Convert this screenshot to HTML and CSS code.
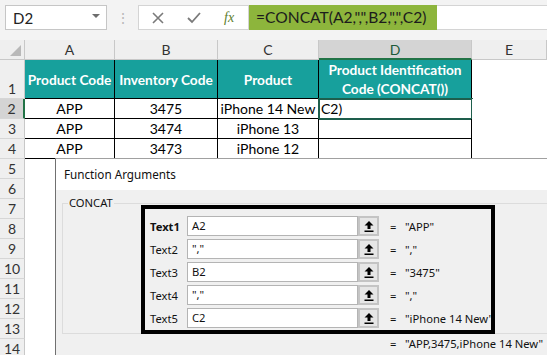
FILE: index.html
```html
<!DOCTYPE html>
<html lang="en">
  <head>
    <meta charset="UTF-8" />
    <title>CONCAT - Function Arguments</title>
    <link rel="stylesheet" href="styles.css">
  </head>

  <body>
    <div class="topbar">
      <div class="namebox">
        <span>D2</span>
        <span class="caret"></span>
      </div>
      <div class="grip">⋮</div>
      <div class="fbuttons">
        <svg class="ico" width="12" height="12" viewBox="0 0 12 12"><path d="M1 1 L11 11 M11 1 L1 11" stroke="#7a7a7a" stroke-width="1.6" fill="none"/></svg>
        <svg class="ico" width="14" height="12" viewBox="0 0 14 12"><path d="M1 6 L5 10 L13 1" stroke="#7a7a7a" stroke-width="1.8" fill="none"/></svg>
        <span class="fx">fx</span>
      </div>
      <div class="formula">=CONCAT(A2,",",B2,",",C2)</div>
      <div class="formula-rest"></div>
    </div>

    <div class="sheet">
      <div class="corner"><span class="tri"></span></div>
      <div class="colhead">A</div>
      <div class="colhead">B</div>
      <div class="colhead">C</div>
      <div class="colhead sel">D</div>
      <div class="colhead">E</div>

      <div class="rowhead bottom">1</div>
      <div class="cell th">Product Code</div>
      <div class="cell th">Inventory Code</div>
      <div class="cell th">Product</div>
      <div class="cell th">Product Identification Code (CONCAT())</div>
      <div class="cell blank"></div>

      <div class="rowhead sel">2</div>
      <div class="cell td">APP</div>
      <div class="cell td">3475</div>
      <div class="cell td">iPhone 14 New</div>
      <div class="cell td left active">C2)</div>
      <div class="cell blank"></div>

      <div class="rowhead">3</div>
      <div class="cell td">APP</div>
      <div class="cell td">3474</div>
      <div class="cell td">iPhone 13</div>
      <div class="cell td"></div>
      <div class="cell blank"></div>

      <div class="rowhead">4</div>
      <div class="cell td">APP</div>
      <div class="cell td">3473</div>
      <div class="cell td">iPhone 12</div>
      <div class="cell td"></div>
      <div class="cell blank"></div>

      <div class="rowhead">5</div><div class="rest"></div>
      <div class="rowhead">6</div><div class="rest"></div>
      <div class="rowhead">7</div><div class="rest"></div>
      <div class="rowhead">8</div><div class="rest"></div>
      <div class="rowhead">9</div><div class="rest"></div>
      <div class="rowhead">10</div><div class="rest"></div>
      <div class="rowhead">11</div><div class="rest"></div>
      <div class="rowhead">12</div><div class="rest"></div>
      <div class="rowhead">13</div><div class="rest"></div>
      <div class="rowhead">14</div><div class="rest"></div>
    </div>

    <!-- dialog sits over the sheet -->
    <div class="dialog">
      <div class="dlg-title">Function Arguments</div>
      <div class="dlg-body">
        <div class="group">
          <span class="legend">CONCAT</span>
          <div class="args">
            <div class="arg">
              <span class="lbl strong">Text1</span>
              <span class="inp">A2</span>
              <span class="pick"><svg width="10" height="11" viewBox="0 0 10 11"><path d="M5 0 L9.5 4.5 L6.5 4.5 L6.5 8 L3.5 8 L3.5 4.5 L0.5 4.5 Z M0.5 9.5 L9.5 9.5 L9.5 11 L0.5 11 Z" fill="#000"/></svg></span>
              <span class="eq">=</span>
              <span class="val">"APP"</span>
            </div>
            <div class="arg">
              <span class="lbl">Text2</span>
              <span class="inp">","</span>
              <span class="pick"><svg width="10" height="11" viewBox="0 0 10 11"><path d="M5 0 L9.5 4.5 L6.5 4.5 L6.5 8 L3.5 8 L3.5 4.5 L0.5 4.5 Z M0.5 9.5 L9.5 9.5 L9.5 11 L0.5 11 Z" fill="#000"/></svg></span>
              <span class="eq">=</span>
              <span class="val">","</span>
            </div>
            <div class="arg">
              <span class="lbl">Text3</span>
              <span class="inp">B2</span>
              <span class="pick"><svg width="10" height="11" viewBox="0 0 10 11"><path d="M5 0 L9.5 4.5 L6.5 4.5 L6.5 8 L3.5 8 L3.5 4.5 L0.5 4.5 Z M0.5 9.5 L9.5 9.5 L9.5 11 L0.5 11 Z" fill="#000"/></svg></span>
              <span class="eq">=</span>
              <span class="val">"3475"</span>
            </div>
            <div class="arg">
              <span class="lbl">Text4</span>
              <span class="inp">","</span>
              <span class="pick"><svg width="10" height="11" viewBox="0 0 10 11"><path d="M5 0 L9.5 4.5 L6.5 4.5 L6.5 8 L3.5 8 L3.5 4.5 L0.5 4.5 Z M0.5 9.5 L9.5 9.5 L9.5 11 L0.5 11 Z" fill="#000"/></svg></span>
              <span class="eq">=</span>
              <span class="val">","</span>
            </div>
            <div class="arg">
              <span class="lbl">Text5</span>
              <span class="inp">C2</span>
              <span class="pick"><svg width="10" height="11" viewBox="0 0 10 11"><path d="M5 0 L9.5 4.5 L6.5 4.5 L6.5 8 L3.5 8 L3.5 4.5 L0.5 4.5 Z M0.5 9.5 L9.5 9.5 L9.5 11 L0.5 11 Z" fill="#000"/></svg></span>
              <span class="eq">=</span>
              <span class="val">"iPhone 14 New"</span>
            </div>
          </div>
          <div class="mark"></div>
        </div>
        <div class="result">
          <span class="eq">=</span>
          <span class="val">"APP,3475,iPhone 14 New"</span>
        </div>
      </div>
    </div>
  </body>
</html>
```

FILE: styles.css
```css
* {
  padding: 0px;
  margin: 0px;
  box-sizing: border-box;
}

html,
body {
  width: 547px;
  height: 355px;
  overflow: hidden;
  background: #fff;
  font-family: Lato, "Liberation Sans", sans-serif;
  position: relative;
}

/* formula bar */
.topbar {
  height: 40px;
  background: #f3f3f3;
  display: flex;
  align-items: flex-start;
  padding-top: 5px;
  padding-left: 5px;
}

.namebox {
  width: 102px;
  height: 25px;
  background: #fff;
  border: 1px solid #c6c6c6;
  display: flex;
  align-items: center;
  justify-content: space-between;
  padding: 0 6px 0 7px;
  font-size: 15px;
  color: #222;
}

.caret {
  width: 0;
  height: 0;
  border-left: 4px solid transparent;
  border-right: 4px solid transparent;
  border-top: 4px solid #6d6d6d;
  margin-top: -3px;
}

.grip {
  width: 31px;
  height: 25px;
  text-align: center;
  color: #b8b8b8;
  font-size: 14px;
  line-height: 25px;
}

.fbuttons {
  width: 111px;
  height: 25px;
  background: #fff;
  border: 1px solid #d4d4d4;
  display: flex;
  align-items: center;
  padding-left: 13px;
  gap: 23px;
}

.fx {
  font-family: "Liberation Serif", serif;
  font-style: italic;
  font-size: 14px;
  color: #5d7e2d;
}

.formula {
  width: 188px;
  height: 25px;
  background: #8db53c;
  font-size: 15.6px;
  line-height: 25px;
  padding-left: 7px;
  color: #1c1c1c;
  white-space: nowrap;
}

.formula-rest {
  flex: 1;
  height: 25px;
  background: #fff;
  border-top: 1px solid #d4d4d4;
  border-bottom: 1px solid #d4d4d4;
}

/* sheet grid */
.sheet {
  display: grid;
  grid-template-columns: 25px 90px 103px 101px 153px 75px;
  grid-template-rows: 20px 39px repeat(13, 20px);
}

.corner {
  background: #efefef;
  border-right: 1px solid #c8c8c8;
  border-bottom: 1px solid #c8c8c8;
  position: relative;
}

.tri {
  position: absolute;
  right: 3px;
  bottom: 3px;
  width: 0;
  height: 0;
  border-left: 11px solid transparent;
  border-bottom: 11px solid #b9b9b9;
}

.colhead {
  background: #efefef;
  border-right: 1px solid #c8c8c8;
  border-bottom: 1px solid #c8c8c8;
  text-align: center;
  font-size: 14px;
  line-height: 19px;
  color: #333;
}

.colhead.sel {
  background: #d4d4d4;
  border-bottom: 2px solid #217346;
  color: #1d5a3a;
}

.rowhead {
  background: #efefef;
  border-right: 1px solid #c8c8c8;
  border-bottom: 1px solid #d6d6d6;
  text-align: center;
  font-size: 14px;
  line-height: 19px;
  color: #333;
}

.rowhead.bottom {
  display: flex;
  align-items: flex-end;
  justify-content: center;
}

.rowhead.sel {
  background: #d4d4d4;
  border-right: 2px solid #217346;
}

.cell {
  font-size: 14px;
  color: #000;
  white-space: nowrap;
  overflow: visible;
}

.th {
  background: #17a09c;
  color: #fff;
  font-weight: bold;
  font-size: 13.7px;
  border-right: 1px solid #000;
  border-bottom: 1px solid #000;
  display: flex;
  align-items: center;
  justify-content: center;
  text-align: center;
  white-space: normal;
  line-height: 19px;
}

.td {
  border-right: 1px solid #000;
  border-bottom: 1px solid #000;
  text-align: center;
  line-height: 19px;
}

.td.left {
  text-align: left;
  padding-left: 2px;
}

.active {
  outline: 2px solid #1e5e4c;
  outline-offset: -1px;
}

.blank,
.rest {
  background: #fff;
}

.rest {
  grid-column: 2 / -1;
}

/* function arguments dialog */
.dialog {
  position: absolute;
  left: 55px;
  top: 158px;
  width: 500px;
  height: 210px;
  background: #f0f0f0;
  border-left: 1px solid #707070;
  border-top: 1px solid #a0a0a0;
  font-family: "Noto Sans", "Open Sans", sans-serif;
  font-size: 11.2px;
  color: #111;
}

.dlg-title {
  height: 31px;
  background: #fff;
  line-height: 30px;
  padding-left: 8px;
  font-size: 11.7px;
}

.dlg-body {
  padding: 13px 0 0 6px;
}

.group {
  position: relative;
  height: 131px;
  border: 1px solid #dcdcdc;
  border-right: none;
}

.legend {
  position: absolute;
  left: 5px;
  top: -9px;
  background: #f0f0f0;
  padding: 0 1px;
  line-height: 16px;
}

.args {
  display: flex;
  flex-direction: column;
  gap: 3px;
  padding: 12px 0 0 87px;
}

.arg {
  display: flex;
  align-items: center;
  height: 20px;
}

.lbl {
  width: 37px;
}

.lbl.strong {
  font-weight: bold;
}

.inp {
  width: 171px;
  height: 20px;
  background: #fff;
  border: 1px solid #b4b4b4;
  line-height: 18px;
  padding-left: 4px;
}

.pick {
  width: 21px;
  height: 20px;
  background: #e6e6e6;
  border: 2px solid #c4c4c4;
  display: flex;
  align-items: center;
  justify-content: center;
}

.eq {
  width: 15px;
  margin-left: 11px;
}

.val {
  white-space: nowrap;
}

.mark {
  position: absolute;
  left: 78px;
  top: 1px;
  width: 354px;
  height: 129px;
  border: 4px solid #000;
}

.result {
  display: flex;
  padding-left: 317px;
  padding-top: 2px;
}
```
